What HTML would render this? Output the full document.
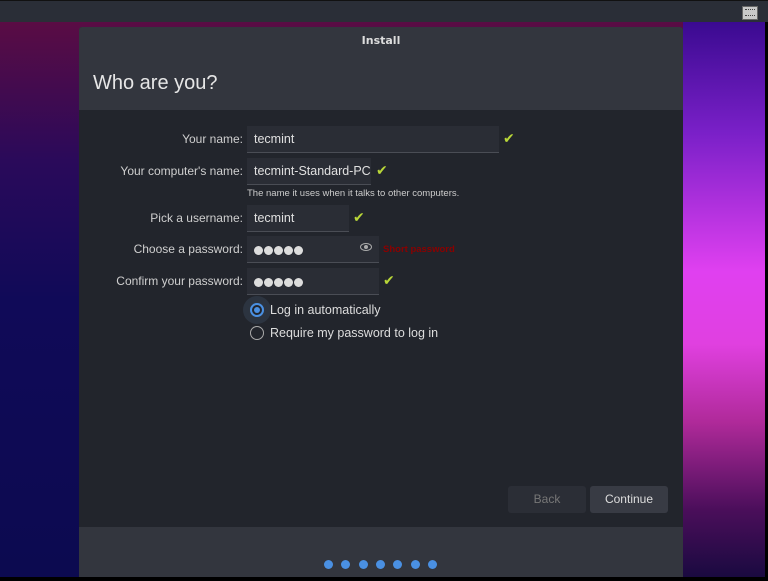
<!DOCTYPE html>
<html><head><style>
*{margin:0;padding:0;box-sizing:border-box}
body{width:768px;height:581px;background:#000;position:relative;overflow:hidden;font-family:"Liberation Sans","DejaVu Sans",sans-serif;}
.bg{position:absolute;left:0;top:22px;width:765px;height:555px;background:linear-gradient(180deg,#5a0c44 0%,#2a0a5a 25%,#100a58 50%,#0c0a50 100%)}
.bgr{position:absolute;left:683px;top:22px;width:82px;height:555px;background:linear-gradient(180deg,#3a0a90 0%,#7a20c8 20%,#e040f0 45%,#e040e0 58%,#b02a9a 72%,#4a0e5a 88%,#1a0a40 100%)}
.top{position:absolute;left:0;top:0;width:768px;height:22px;background:#2a2e37;border-top:1px solid #111}
.kb{position:absolute;left:742px;top:5px;width:16px;height:14px;background:#c8c8c8;border:1px solid #666}
.kb:after{content:"";position:absolute;left:2px;top:2px;width:10px;height:5px;border-top:1px dotted #444;border-bottom:1px dotted #444}
.win{position:absolute;left:79px;top:27px;width:604px;height:550px;background:#22252c;border-radius:3px 3px 0 0;overflow:hidden}
.hd{position:absolute;left:0;top:0;width:604px;height:83px;background:#33363e}
.ttl{position:absolute;top:7px;width:604px;text-align:center;color:#ddd;font-size:11px;font-weight:bold;font-family:"DejaVu Sans",sans-serif}
.who{position:absolute;left:14px;top:45px;color:#e6e6e6;font-size:20px}
.ft{position:absolute;left:0;top:500px;width:604px;height:50px;background:#33363e}
.lbl{position:absolute;right:440px;color:#cfcfcf;font-size:12px;text-align:right;white-space:nowrap}
.in{position:absolute;left:168px;height:27px;background:#2a2d35;border-bottom:1px solid #4a4d55;color:#e0e0e0;font-size:12.5px;padding:6px 7px;white-space:nowrap;overflow:hidden}
.ck{position:absolute;color:#b8d638;font-size:14px;font-weight:bold;font-family:"DejaVu Sans",sans-serif}
.dots{padding:8px 7px}
.dots i{display:inline-block;width:9px;height:9px;border-radius:50%;background:#ddd;margin-right:1px}
.btn{position:absolute;top:459px;height:27px;border-radius:3px;font-size:12px;text-align:center;line-height:27px}
.pd{position:absolute;top:533px;width:9px;height:9px;border-radius:50%;background:#4a90e2}
</style></head><body>
<div class="bg"></div><div class="bgr"></div>
<div class="top"><div class="kb"></div></div>
<div class="win">
<div class="hd"><div class="ttl">Install</div><div class="who">Who are you?</div></div>
<div class="lbl" style="top:105px">Your name:</div>
<div class="in" style="top:99px;width:252px">tecmint</div><div class="ck" style="left:424px;top:104px">✔</div>
<div class="lbl" style="top:137px">Your computer's name:</div>
<div class="in" style="top:131px;width:124px">tecmint-Standard-PC-(</div><div class="ck" style="left:297px;top:136px">✔</div>
<div style="position:absolute;left:168px;top:161px;color:#ccc;font-size:9.5px">The name it uses when it talks to other computers.</div>
<div class="lbl" style="top:184px">Pick a username:</div>
<div class="in" style="top:178px;width:102px">tecmint</div><div class="ck" style="left:274px;top:183px">✔</div>
<div class="lbl" style="top:215px">Choose a password:</div>
<div class="in dots" style="top:209px;width:132px"><i></i><i></i><i></i><i></i><i></i></div>
<div style="position:absolute;left:281px;top:216px;width:12px;height:8px;border:1.5px solid #aaa;border-radius:50%"><div style="margin:1px auto;width:4px;height:4px;border-radius:50%;background:#aaa"></div></div>
<div style="position:absolute;left:304px;top:217px;color:#8b0000;font-size:9.5px;font-weight:bold">Short password</div>
<div class="lbl" style="top:247px">Confirm your password:</div>
<div class="in dots" style="top:241px;width:132px"><i></i><i></i><i></i><i></i><i></i></div><div class="ck" style="left:304px;top:246px">✔</div>
<div style="position:absolute;left:164px;top:269px;width:28px;height:28px;border-radius:50%;background:#2c3440"></div>
<div style="position:absolute;left:171px;top:276px;width:14px;height:14px;border-radius:50%;border:2px solid #4a90e2;background:#22252c"><div style="margin:2px;width:6px;height:6px;border-radius:50%;background:#4a90e2"></div></div>
<div style="position:absolute;left:191px;top:276px;color:#ddd;font-size:12.5px">Log in automatically</div>
<div style="position:absolute;left:171px;top:299px;width:14px;height:14px;border-radius:50%;border:1.5px solid #aaa"></div>
<div style="position:absolute;left:191px;top:299px;color:#ddd;font-size:12.5px">Require my password to log in</div>
<div class="btn" style="left:429px;width:78px;background:#2b2e36;color:#777">Back</div>
<div class="btn" style="left:511px;width:78px;background:#383b44;color:#ddd">Continue</div>
<div class="ft"></div>
<div class="pd" style="left:245px"></div><div class="pd" style="left:262px"></div><div class="pd" style="left:280px"></div><div class="pd" style="left:297px"></div><div class="pd" style="left:314px"></div><div class="pd" style="left:332px"></div><div class="pd" style="left:349px"></div>
</div>
</body></html>
